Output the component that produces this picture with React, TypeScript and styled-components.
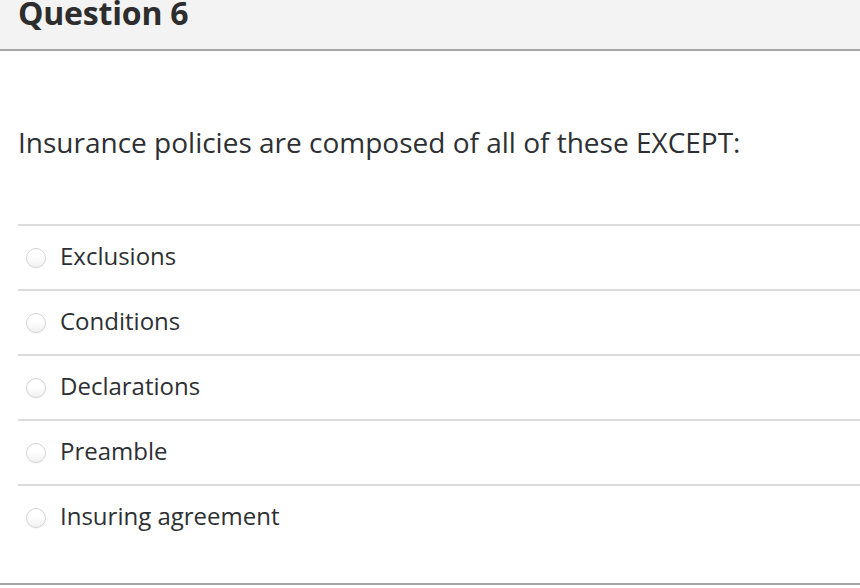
import React from "react";
import styled, { createGlobalStyle } from "styled-components";

const Global = createGlobalStyle`
  html, body { margin: 0; padding: 0; background: #ffffff; }
  body { font-family: "Open Sans", "Liberation Sans", sans-serif; color: #2d2d2d; }
`;

const Page = styled.div`
  width: 860px;
  height: 588px;
  overflow: hidden;
  background: #ffffff;
`;

const Header = styled.header`
  height: 49px;
  background: #f3f3f3;
  border-bottom: 2px solid #a6a6a6;
  padding-left: 18px;
  box-sizing: content-box;
`;

const Title = styled.h2`
  margin: 0;
  font-size: 32px;
  font-weight: 700;
  line-height: 25px;
  color: #2d2d2d;
  letter-spacing: -0.2px;
`;

const Body = styled.section`
  padding: 73px 0 0 18px;
`;

const Prompt = styled.p`
  margin: 0;
  font-size: 28px;
  line-height: 36px;
  color: #2d3033;
`;

const Options = styled.ul`
  list-style: none;
  margin: 64px 0 0;
  padding: 0 0 34px;
`;

const Option = styled.li`
  display: flex;
  align-items: center;
  height: 65px;
  box-sizing: border-box;
  border-top: 2px solid #dcdcdc;
  padding-left: 8px;
`;

const Radio = styled.span`
  width: 18px;
  height: 18px;
  border-radius: 50%;
  border: 1px solid #d3d3d3;
  background: linear-gradient(#ffffff 40%, #f1f1f1);
  box-shadow: 0 1px 1px rgba(0, 0, 0, 0.04);
  flex: none;
`;

const Label = styled.span`
  margin-left: 14px;
  font-size: 24px;
  line-height: 30px;
  margin-bottom: 3px;
  color: #2d3033;
`;

const Footer = styled.div`
  border-top: 2px solid #a6a6a6;
`;

const choices = ["Exclusions", "Conditions", "Declarations", "Preamble", "Insuring agreement"];

export default function App() {
  return (
    <Page>
      <Global />
      <Header>
        <Title>Question 6</Title>
      </Header>
      <Body>
        <Prompt>Insurance policies are composed of all of these EXCEPT:</Prompt>
        <Options>
          {choices.map((c) => (
            <Option key={c}>
              <Radio />
              <Label>{c}</Label>
            </Option>
          ))}
        </Options>
      </Body>
      <Footer />
    </Page>
  );
}
